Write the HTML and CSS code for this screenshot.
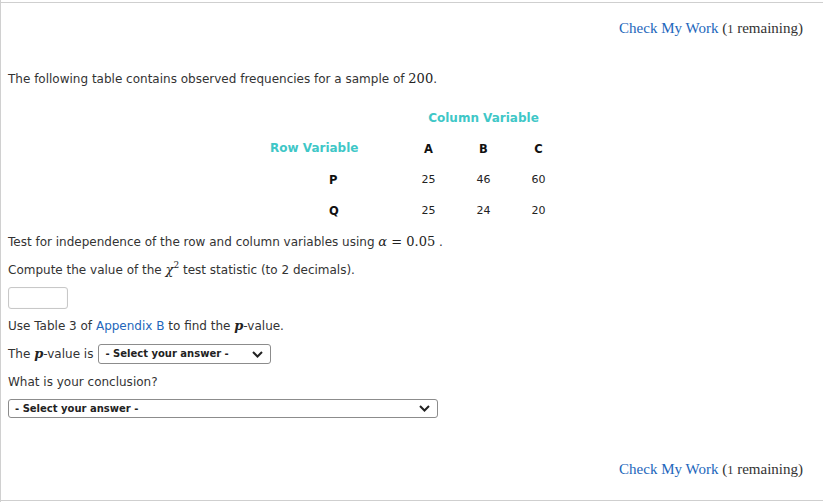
FILE: index.html
```html
<!DOCTYPE html>
<html>
<head>
<meta charset="utf-8">
<link rel="stylesheet" href="styles.css">
</head>
<body>
<div class="page">
  <div class="panel">
    <div class="cmw"><a class="link">Check My Work</a> (<span class="os">1</span> remaining)</div>

    <p class="intro">The following table contains observed frequencies for a sample of <span class="math">200</span>.</p>

    <div class="ctable">
      <div class="cell colvar">Column Variable</div>
      <div class="cell rowvar">Row Variable</div>
      <div class="cell hd">A</div>
      <div class="cell hd">B</div>
      <div class="cell hd">C</div>
      <div class="cell rlabel">P</div>
      <div class="cell num">25</div>
      <div class="cell num">46</div>
      <div class="cell num">60</div>
      <div class="cell rlabel">Q</div>
      <div class="cell num">25</div>
      <div class="cell num">24</div>
      <div class="cell num">20</div>
    </div>

    <p class="line l-test">Test for independence of the row and column variables using <span class="math"><i class="mi">α</i> = 0.05</span> .</p>
    <p class="line">Compute the value of the <span class="math"><i class="mi">χ</i><sup class="sup">2</sup></span> test statistic (to 2 decimals).</p>
    <div class="inbox"></div>
    <p class="line">Use Table 3 of <a class="blink">Appendix B</a> to find the <i class="mp">p</i>-value.</p>
    <div class="line row"><span class="lbl">The <i class="mp">p</i>-value is</span><div class="sel sel-short"><span>- Select your answer -</span><svg class="chev" width="11" height="7" viewBox="0 0 11 7"><path d="M1 1 L5.5 5.5 L10 1" fill="none" stroke="#222" stroke-width="2"/></svg></div></div>
    <p class="line">What is your conclusion?</p>
    <div class="sel sel-long"><span>- Select your answer -</span><svg class="chev" width="11" height="7" viewBox="0 0 11 7"><path d="M1 1 L5.5 5.5 L10 1" fill="none" stroke="#222" stroke-width="2"/></svg></div>

    <div class="cmw bottom"><a class="link">Check My Work</a> (<span class="os">1</span> remaining)</div>
  </div>
</div>
</body>
</html>
```

FILE: styles.css
```css
html, body {
  margin: 0;
  padding: 0;
  background: #fff;
}
body {
  font-family: "DejaVu Sans", Verdana, sans-serif;
  font-size: 12px;
  color: #333;
}
.page {
  border-left: 1px solid #d0d0d0;
  height: 502px;
  box-sizing: border-box;
  padding-top: 2px;
}
.panel {
  border-top: 1px solid #cfcfcf;
  border-bottom: 1px solid #cfcfcf;
  height: 499px;
  box-sizing: border-box;
  display: flex;
  flex-direction: column;
  padding: 15px 20px 20px 7px;
}
.cmw {
  align-self: flex-end;
  font-family: "Liberation Serif", "DejaVu Serif", serif;
  font-size: 15px;
  line-height: 20px;
  color: #333;
}
.cmw .link { color: #2266bb; }
.cmw .os { font-size: 12.5px; }
.cmw.bottom { margin-top: auto; }
p { margin: 0; }
.intro {
  line-height: 20px;
  margin-top: 30px;
}
.math {
  font-family: "DejaVu Serif", serif;
  font-size: 13px;
  color: #222;
}
.mi { font-style: italic; }
.sup { font-size: 9px; vertical-align: 6px; line-height: 0; }
.mp {
  font-family: "DejaVu Serif", serif;
  font-style: italic;
  font-weight: bold;
  font-size: 13px;
  color: #222;
}
.blink { color: #2266bb; }
.ctable {
  margin-top: 13px;
  margin-left: 262px;
  display: grid;
  grid-template-columns: 131px 55px 55px 55px;
  grid-auto-rows: 31px;
  align-items: center;
}
.cell { text-align: center; }
.colvar {
  grid-column: 2 / span 3;
  color: #3fc7c7;
  font-weight: bold;
  font-size: 12px;
}
.rowvar {
  text-align: left;
  color: #3fc7c7;
  font-weight: bold;
  position: relative;
  top: -1px;
}
.hd { font-weight: bold; color: #111; font-size: 11.5px; }
.rlabel { font-weight: bold; color: #111; text-align: left; padding-left: 59px; font-size: 11.5px; }
.num { font-size: 11px; color: #222; }
.line {
  line-height: 20px;
  margin-top: 8px;
}
.l-test { margin-top: 6px; }
.inbox {
  margin-top: 7px;
  width: 58px;
  height: 20px;
  border: 1px solid #c8c8c8;
  border-radius: 3px;
  box-shadow: inset 0 0 1px #ddd;
}
.inbox + .line { margin-top: 7px; }
.row {
  display: flex;
  align-items: center;
}
.lbl { margin-right: 5px; }
.sel {
  box-sizing: border-box;
  height: 20px;
  border: 1px solid #8c8c8c;
  border-radius: 3px;
  display: flex;
  align-items: center;
  justify-content: space-between;
  padding: 0 7px 0 6px;
  font-weight: bold;
  font-size: 10px;
  color: #222;
  background: #fff;
}
.sel-short { width: 173px; }
.sel-long { width: 430px; margin-top: 7px; height: 19px; }
.chev { display: block; }
```
